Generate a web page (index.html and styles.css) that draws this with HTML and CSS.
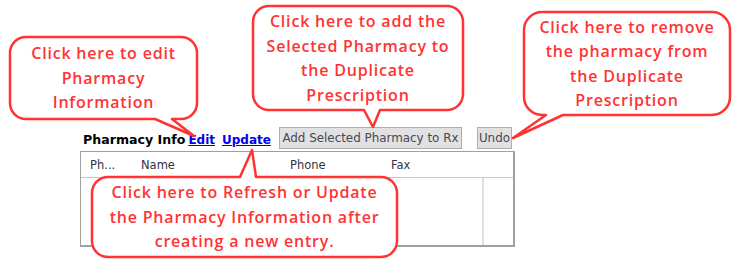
FILE: index.html
```html
<!DOCTYPE html>
<html>
<head>
<meta charset="utf-8">
<link rel="stylesheet" href="styles.css">
</head>
<body>
<div class="page">
  <div class="app">
    <div class="toolbar">
      <span class="title">Pharmacy Info</span>
      <a class="link link-edit" href="#">Edit</a>
      <a class="link link-update" href="#">Update</a>
      <button class="btn btn-add">Add Selected Pharmacy to Rx</button>
      <button class="btn btn-undo">Undo</button>
    </div>
    <div class="grid">
      <div class="grid-head">
        <span class="col col-ph">Ph...</span>
        <span class="col col-name">Name</span>
        <span class="col col-phone">Phone</span>
        <span class="col col-fax">Fax</span>
      </div>
      <div class="grid-body">
        <div class="body-main"></div>
        <div class="body-split"></div>
      </div>
    </div>
  </div>

  <svg class="callouts" width="737" height="267" viewBox="0 0 737 267">
    <path class="bubble" d="M26 37 H181 A16 16 0 0 1 197 53 V103 A16 16 0 0 1 181 119 H172 L194 136 L155 119 H26 A16 16 0 0 1 10 103 V53 A16 16 0 0 1 26 37 Z"/>
    <path class="bubble" d="M269 6 H447 A16 16 0 0 1 463 22 V94 A16 16 0 0 1 447 110 H380 L373 127 L364 110 H269 A16 16 0 0 1 253 94 V22 A16 16 0 0 1 269 6 Z"/>
    <path class="bubble" d="M542 12 H712 A18 18 0 0 1 730 30 V97 A18 18 0 0 1 712 115 H563 L513 138 L546 115 H542 A18 18 0 0 1 524 97 V30 A18 18 0 0 1 542 12 Z"/>
    <path class="bubble" d="M108 177 H240 L252 150 L256 177 H381 A16 16 0 0 1 397 193 V241 A16 16 0 0 1 381 257 H108 A16 16 0 0 1 92 241 V193 A16 16 0 0 1 108 177 Z"/>
  </svg>

  <div class="note note-edit">Click here to edit<br>Pharmacy<br>Information</div>
  <div class="note note-add">Click here to add the<br>Selected Pharmacy to<br>the Duplicate<br>Prescription</div>
  <div class="note note-undo">Click here to remove<br>the pharmacy from<br>the Duplicate<br>Prescription</div>
  <div class="note note-update">Click here to Refresh or Update<br>the Pharmacy Information after<br>creating a new entry.</div>
</div>
</body>
</html>
```

FILE: styles.css
```css
html, body {
  margin: 0;
  padding: 0;
  background: #ffffff;
}

.page {
  position: relative;
  width: 737px;
  height: 267px;
  overflow: hidden;
  font-family: "DejaVu Sans", Verdana, sans-serif;
}

.app {
  padding: 127px 0 0 80px;
}

.toolbar {
  display: flex;
  align-items: flex-end;
  height: 23px;
}

.title {
  margin-left: 3px;
  font-weight: bold;
  font-size: 12.6px;
  color: #000000;
  line-height: 20px;
}

.link {
  font-weight: bold;
  font-size: 12px;
  color: #0000ee;
  text-decoration: underline;
  line-height: 20px;
}

.link-edit {
  margin-left: 3px;
}

.link-update {
  margin-left: 7px;
}

.btn {
  font-family: "DejaVu Sans", Verdana, sans-serif;
  font-size: 11.9px;
  color: #474758;
  background: #e1e1e1;
  border: 1px solid #adadad;
  padding: 0;
  height: 22px;
  margin: 0 0 1px 0;
  box-sizing: border-box;
  white-space: nowrap;
  overflow: visible;
}

.btn-add {
  margin-left: 8px;
  width: 183px;
}

.btn-undo {
  margin-left: 15px;
  width: 35px;
}

.grid {
  width: 435px;
  height: 96px;
  margin-top: 1px;
  box-sizing: border-box;
  border: 1px solid #a0a0a0;
  border-right: 2px solid #a0a0a0;
  border-bottom: 2px solid #a0a0a0;
  display: flex;
  flex-direction: column;
}

.grid-head {
  height: 25px;
  border-bottom: 1px solid #c8c8c8;
  position: relative;
  font-size: 11.5px;
  color: #333344;
}

.col {
  position: absolute;
  top: 6px;
}

.col-ph { left: 9px; }
.col-name { left: 60px; }
.col-phone { left: 209px; }
.col-fax { left: 310px; }

.grid-body {
  flex: 1;
  display: flex;
}

.body-main {
  width: 401px;
}

.body-split {
  width: 2px;
  background: #e0e0e0;
}

.callouts {
  position: absolute;
  left: 0;
  top: 0;
}

.bubble {
  fill: #ffffff;
  stroke: #ff3333;
  stroke-width: 2.5;
  stroke-linejoin: round;
}

.note {
  position: absolute;
  display: flex;
  align-items: center;
  justify-content: center;
  text-align: center;
  font-family: "Open Sans", Lato, sans-serif;
  font-weight: 600;
  font-size: 16px;
  letter-spacing: 0.8px;
  line-height: 24.5px;
  color: #ff3333;
  white-space: nowrap;
}

.note-edit {
  left: 10px;
  top: 37px;
  width: 187px;
  height: 82px;
}

.note-add {
  left: 253px;
  top: 6px;
  width: 210px;
  height: 104px;
}

.note-undo {
  left: 524px;
  top: 12px;
  width: 206px;
  height: 103px;
}

.note-update {
  left: 92px;
  top: 177px;
  width: 305px;
  height: 80px;
}
```
